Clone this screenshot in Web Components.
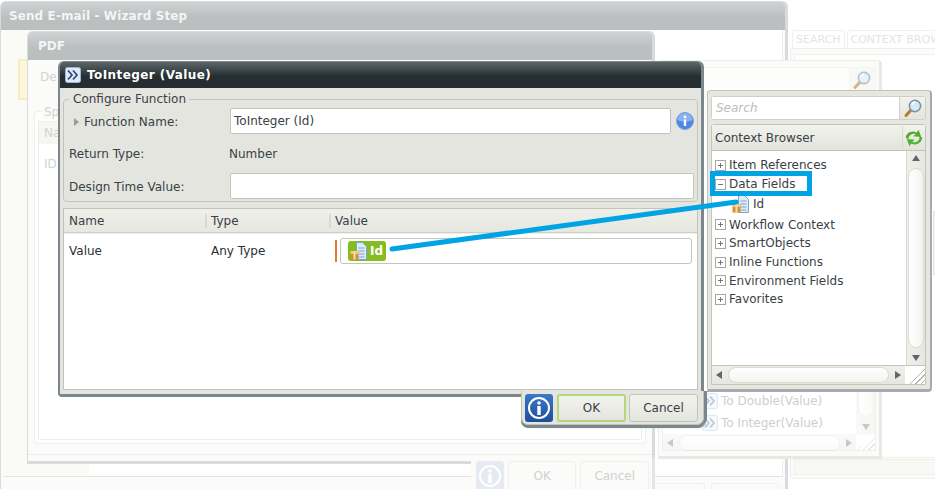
<!DOCTYPE html>
<html>
<head>
<meta charset="utf-8">
<title>ToInteger (Value)</title>
<style>
  html, body { margin: 0; height: 100%; overflow: hidden; background: #fff; }
  body { position: relative; width: 935px; height: 489px; font: 12px "DejaVu Sans", Verdana, sans-serif; color: #394145; }
</style>
</head>
<body>

<!-- fenetres de fond -->
<app-window title="Send E-mail - Wizard Step" faded style="left:0;top:1px;width:788px;height:500px;--body:#fff;--track:.1px">
  <ghost-wizard></ghost-wizard>
</app-window>

<ghost-tabs style="left:790px;top:30px;width:160px;height:449px"></ghost-tabs>

<app-window title="PDF" faded style="left:27px;top:31px;width:628px;height:433px;--body:#fbfbf9;--pad:10px">
  <ghost-pdf></ghost-pdf>
</app-window>
<footer-tab faded style="left:471px;top:458px;width:184px;height:36px"></footer-tab>

<ghost-browser style="left:658px;top:60px;width:224px;height:399px"></ghost-browser>

<!-- dialogue principal -->
<app-window title="ToInteger (Value)" icon style="left:58px;top:61px;width:646px;height:336px;--body:#e4e5df;--track:.42px">
  <function-form></function-form>
</app-window>
<footer-tab style="left:521px;top:391px;width:183px;height:34px"></footer-tab>

<context-browser style="left:707px;top:90px;width:225px;height:302px"></context-browser>

<!-- annotation en bleu -->
<call-out style="left:0;top:0;width:935px;height:489px"></call-out>

<script>
// icones partages
const ICONS = {
  search: `<svg width="20" height="20" viewBox="0 0 20 20"><path d="M8 12 3 17.500" stroke="#b7792c" stroke-width="3" stroke-linecap="round"/><circle cx="12" cy="8" r="5.600" fill="#d8e9f6" stroke="#7c95a6" stroke-width="1.600"/><path d="M9 7a3 3 0 0 1 3-3" stroke="#fff" stroke-width="1.400" fill="none"/></svg>`,
  refresh: `<svg width="20" height="20" viewBox="0 0 22 22"><path d="M2 11C2 6 8 2 14 5l2-3 3 8-9-1 3-2.500C9 5.500 5 8 5 12Z" fill="#58a82c"/><path d="M20 10c0 6-6 10-12 7l-2 3-3-8 9 1-3 2.500c4 1.500 8-1 8-5.500Z" fill="#4cb52f"/></svg>`,
  chevrons: `<svg width="16" height="16" viewBox="0 0 16 16"><rect x=".5" y=".5" width="15" height="15" rx="2" fill="#dfe9f7" stroke="#9fb5d2"/><path d="M3 3.500 7 8l-4 4.500M8 3.500 12 8l-4 4.500" fill="none" stroke="#27476f" stroke-width="1.700"/></svg>`,
  info: `<svg width="18" height="18" viewBox="0 0 18 18"><circle cx="9" cy="9" r="8.500" fill="#4f86e2" stroke="#7ca4e8"/><path d="M1.500 8a7.500 7 0 0 1 15 0c-3 2-12 2-15 0Z" fill="#8db0ee"/><circle cx="9" cy="5" r="1.400" fill="#fff"/><rect x="7.800" y="7.500" width="2.400" height="6.500" fill="#fff"/></svg>`,
  field: `<svg width="20" height="20" viewBox="0 0 20 20"><path d="M7.500 1.500h6l4 4v13h-10Z" fill="#dcebf7" stroke="#7ba6c9"/><path d="M9.500 7h6M9.500 10h6M9.500 13h6M9.500 16h6" stroke="#7ba6c9"/><rect x="1.500" y="10" width="8" height="8.500" fill="#d98f2f"/><rect x="1.500" y="10" width="8" height="3" fill="#f2c77c"/><rect x="4.500" y="10" width="2" height="8.500" fill="#f6dfa9"/></svg>`
};

// fenetre avec barre de titre, claire (faded) ou sombre
class AppWindow extends HTMLElement {
  constructor() {
    super();
    this.attachShadow({mode: "open"});
  }
  connectedCallback() {
    const faded = this.hasAttribute("faded");
    this.shadowRoot.innerHTML = `
      <style>
        :host { position: absolute; display: flex; flex-direction: column; box-sizing: border-box; overflow: hidden;
          border-radius: ${faded ? "6px 6px 0 0" : "6px 6px 4px 4px"}; background: ${faded ? "#d8dbdc" : "#7b878d"};
          padding: ${faded ? "1px 3px 3px 1px" : "1px 3px 3px 2px"}; }
        .bar { flex: none; height: ${faded ? "28px" : "26px"}; display: flex; align-items: center; gap: 6px; padding-left: var(--pad, ${faded ? "8px" : "5px"});
          border-radius: 5px 5px 0 0; font-weight: bold; letter-spacing: var(--track, 0); color: ${faded ? "#f4f5f5" : "#fff"};
          background: ${faded ? "linear-gradient(#d0d3d3,#bcbfc0 55%)" : "linear-gradient(#5c6667,#262e31 55%)"}; }
        .bar svg { display: block; }
        .body { flex: 1; min-height: 0; background: var(--body, #fff); display: flex; flex-direction: column; }
      </style>
      <div class="bar">${this.hasAttribute("icon") ? ICONS.chevrons : ""}<span>${this.getAttribute("title")}</span></div>
      <div class="body"><slot></slot></div>`;
  }
}
customElements.define("app-window", AppWindow);

// formulaire du dialogue
class FunctionForm extends HTMLElement {
  constructor() {
    super();
    this.attachShadow({mode: "open"});
    this.shadowRoot.innerHTML = `
      <style>
        :host { display: flex; flex-direction: column; flex: 1; padding: 6px 3px 4px 3px; min-height: 0; }
        fieldset { margin: 0; padding: 4px 3px 4px 5px; height: 108px; box-sizing: border-box; border: 1px solid #c3c5ba; border-radius: 4px; display: grid;
          grid-template-columns: 161px 1fr 23px; grid-template-rows: 26px 39px 26px; align-items: center; }
        legend { margin-left: 0; padding: 0 3px 0 4px; line-height: 10px; height: 10px; }
        .name { display: flex; align-items: center; gap: 5px; padding: 1px 0 0 5px; }
        .low { padding-top: 1px; }
        .tri { width: 0; height: 0; border: 4px solid transparent; border-left: 5px solid #9a9c95; border-right: 0; }
        .box { height: 26px; box-sizing: border-box; background: #fff; border: 1px solid #c3c5ba; border-radius: 2px; padding: 0 3px; line-height: 25px; }
        .info { justify-self: end; height: 18px; }
        .wide { grid-column: 2 / 4; }
        .num { margin-left: -1px; }
        section { flex: 1; margin-top: 6px; border: 1px solid #c3c5ba; background: #fff; display: flex; flex-direction: column; min-height: 0; }
        .head { height: 23px; display: grid; grid-template-columns: 141px 124px 1fr; align-items: center; background: linear-gradient(#f0f0ea,#e6e7e0); border-bottom: 1px solid #cfd0c7; box-shadow: 0 1px 0 #eee; }
        .head span { padding-left: 4px; border-left: 2px solid #d9dad2; height: 14px; line-height: 14px; }
        .head span:first-child { border-left: 0; padding-left: 5px; }
        .row { display: grid; grid-template-columns: 142px 124px 1fr; height: 36px; align-items: center; color: #2b3033; }
        .row > span { padding-left: 5px; }
        .val { display: flex; align-items: center; gap: 3px; margin-left: 5px; padding-right: 5px; }
        .req { width: 2px; height: 22px; background: #e8792a; flex: none; }
        .input { flex: 1; height: 26px; box-sizing: border-box; border: 1px solid #c3c5ba; border-radius: 3px; padding: 2px 7px; display: flex; }
        .pill { display: flex; align-items: center; gap: 1px; width: 38px; height: 20px; box-sizing: border-box; padding-left: 1px; background: #85bc22; color: #fff; font-weight: bold; border-radius: 3px; }
        .pill svg { display: block; }
      </style>
      <fieldset>
        <legend>Configure Function</legend>
        <div class="name"><span class="tri"></span><span>Function Name:</span></div>
        <div class="box">ToInteger (Id)</div>
        <div class="info">${ICONS.info}</div>
        <div>Return Type:</div>
        <div class="num">Number</div>
        <div></div>
        <div class="low">Design Time Value:</div>
        <div class="box wide"></div>
      </fieldset>
      <section>
        <div class="head"><span>Name</span><span>Type</span><span>Value</span></div>
        <div class="row">
          <span>Value</span>
          <span>Any Type</span>
          <div class="val"><span class="req"></span>
            <div class="input"><div class="pill">${ICONS.field}<span>Id</span></div></div>
          </div>
        </div>
      </section>`;
  }
}
customElements.define("function-form", FunctionForm);

// languette de boutons sous une fenetre
class FooterTab extends HTMLElement {
  constructor() {
    super();
    this.attachShadow({mode: "open"});
  }
  connectedCallback() {
    const faded = this.hasAttribute("faded");
    this.shadowRoot.innerHTML = `
      <style>
        :host { position: absolute; display: flex; gap: ${faded ? "4px" : "3px"}; box-sizing: border-box; padding: 3px 3px 3px 5px; align-items: stretch;
          background: ${faded ? "#fbfbf9" : "#e4e5df"}; border-radius: 0 0 7px 7px;
          ${faded ? "border-right: 3px solid #e3e5e6; border-radius: 0;" : "border: 1px solid #c3c5ba; border-top: 0; box-shadow: 0 3px 0 #7b878d, 3px 0 0 #7b878d, 2px 3px 1px #9aa2a6; padding-left: 3px; padding-right: 2px; padding-bottom: 2px;"} }
        .i { width: 28px; margin-right: ${faded ? "0" : "1px"}; border-radius: 3px; display: flex; align-items: center; justify-content: center;
          background: ${faded ? "#e6ebf3" : "linear-gradient(#3b78c6,#1d4e9c)"}; }
        button { font: inherit; padding: 0; width: 69px; color: ${faded ? "#d0d2d0" : "#394145"}; border-radius: 3px;
          border: 1px solid ${faded ? "#f0f0ec" : "#c3c5ba"}; background: ${faded ? "#fbfbf9" : "linear-gradient(#f3f3ee,#e4e5df)"}; }
        .ok { border: ${faded ? "1px solid #f0f0ec" : "2px solid #b5d77a"}; }
        svg { display: block; }
      </style>
      <div class="i"><svg width="24" height="24" viewBox="0 0 24 24"><circle cx="12" cy="12" r="10" fill="none" stroke="#fff" stroke-width="2"/><circle cx="12" cy="7" r="1.800" fill="#fff"/><rect x="10.300" y="10" width="3.400" height="9" fill="#fff"/></svg></div>
      <button class="ok">OK</button>
      <button>Cancel</button>`;
  }
}
customElements.define("footer-tab", FooterTab);

// une ligne de l'arbre
class TreeItem extends HTMLElement {
  constructor() {
    super();
    this.attachShadow({mode: "open"});
  }
  connectedCallback() {
    const open = this.hasAttribute("open");
    this.shadowRoot.innerHTML = `
      <style>
        :host { display: flex; align-items: center; gap: 3px; height: 18.7px; white-space: nowrap; }
        i { display: block; width: 9px; height: 9px; border: 1px solid #a5a8a2; background: linear-gradient(90deg,#777,#777) center/5px 1px no-repeat${open ? "" : ",linear-gradient(#777,#777) center/1px 5px no-repeat"}; }
      </style>
      <i></i><slot></slot>`;
  }
}
customElements.define("tree-item", TreeItem);

// barre de defilement
class ScrollBar extends HTMLElement {
  constructor() {
    super();
    this.attachShadow({mode: "open"});
  }
  connectedCallback() {
    const h = this.hasAttribute("horizontal");
    this.shadowRoot.innerHTML = `
      <style>
        :host { display: flex; flex-direction: ${h ? "row" : "column"}; align-items: center; box-sizing: border-box; background: linear-gradient(${h ? "180deg" : "90deg"},#f0f0ea,#e6e7e0); flex: none;
          ${h ? "height:18px;padding:0 4px" : "width:19px;padding:4px 0"}; }
        .a { width: 0; height: 0; border: 4px solid transparent; flex: none; }
        .t { flex: 1; margin: ${h ? "0 6px" : "7px 0"}; ${h ? "height:14px" : "width:14px"}; background: linear-gradient(${h ? "180deg" : "90deg"},#fff,#f3f3ee); border: 1px solid #dadbd2; border-radius: 8px; }
        .up { border-bottom: 6px solid #5e666b; border-top: 0; }
        .down { border-top: 6px solid #5e666b; border-bottom: 0; }
        .left { border-right: 6px solid #5e666b; border-left: 0; }
        .right { border-left: 6px solid #5e666b; border-right: 0; }
      </style>
      <span class="a ${h ? "left" : "up"}"></span><span class="t"></span><span class="a ${h ? "right" : "down"}"></span>`;
  }
}
customElements.define("scroll-bar", ScrollBar);

// panneau Context Browser
class ContextBrowser extends HTMLElement {
  constructor() {
    super();
    this.attachShadow({mode: "open"});
    this.shadowRoot.innerHTML = `
      <style>
        :host { position: absolute; display: flex; flex-direction: column; box-sizing: border-box; gap: 4px; background: #e6e7e0;
          border: 1px solid #c3c5ba; border-right: 2px solid #a6abad; border-bottom: 3px solid #a6abad; border-radius: 4px 4px 4px 0; padding: 5px 4px 4px 3px; }
        .search { display: flex; height: 24px; flex: none; border: 1px solid #cfd0c7; border-radius: 3px; box-sizing: border-box; }
        .search div { flex: 1; background: #fff; font-style: italic; color: #bcbcbc; line-height: 22px; padding-left: 4px; }
        .search button { width: 26px; padding: 0; border: 0; border-left: 1px solid #cfd0c7; background: linear-gradient(#f3f3ee,#e4e5df); display: flex; align-items: center; justify-content: center; }
        .tree { flex: 1; min-height: 0; display: flex; flex-direction: column; border: 1px solid #c3c5ba; border-radius: 3px 3px 0 0; background: #fff; }
        .head { flex: none; height: 25px; display: flex; align-items: center; justify-content: space-between; padding-left: 3px; background: linear-gradient(#f3f3ee,#e2e3dc); border-bottom: 1px solid #c3c5ba; }
        .head span { flex: none; width: 22px; height: 24px; border-left: 1px solid #d9dad2; display: flex; align-items: center; justify-content: center; }
        .mid { flex: 1; min-height: 0; display: flex; }
        .items { flex: 1; padding: 5px 0 0 3px; }
        .child { display: flex; align-items: center; gap: 2px; height: 19px; margin: 1px 0 2px 16px; }
        .bottom { flex: none; display: flex; height: 18px; border-top: 1px solid #c3c5ba; }
        .bottom scroll-bar { flex: 1; }
        .grip { width: 19px; border-left: 1px solid #d9dad2; background: repeating-linear-gradient(135deg,transparent 0 3px,#b5b8b0 3px 4px); clip-path: polygon(100% 0,100% 100%,0 100%); }
        scroll-bar { border-left: 1px solid #d9dad2; }
        .bottom scroll-bar { border-left: 0; }
        svg { display: block; }
      </style>
      <div class="search"><div>Search</div><button>${ICONS.search}</button></div>
      <div class="tree">
        <div class="head">Context Browser<span>${ICONS.refresh}</span></div>
        <div class="mid">
          <div class="items">
            <tree-item>Item References</tree-item>
            <tree-item open>Data Fields</tree-item>
            <div class="child">${ICONS.field}<span>Id</span></div>
            <tree-item>Workflow Context</tree-item>
            <tree-item>SmartObjects</tree-item>
            <tree-item>Inline Functions</tree-item>
            <tree-item>Environment Fields</tree-item>
            <tree-item>Favorites</tree-item>
          </div>
          <scroll-bar></scroll-bar>
        </div>
        <div class="bottom"><scroll-bar horizontal></scroll-bar><span class="grip"></span></div>
      </div>`;
  }
}
customElements.define("context-browser", ContextBrowser);

// fond de la fenetre Wizard
class GhostWizard extends HTMLElement {
  constructor() {
    super();
    this.attachShadow({mode: "open"});
    this.shadowRoot.innerHTML = `
      <style>
        :host { display: flex; flex-direction: column; flex: 1; background: #fbfbf9; padding: 0 2px; }
        .top { flex: none; height: 446px; display: flex; border-bottom: 1px solid #e4e5e3; }
        .left { width: 86px; background: #fafaf7; padding: 29px 0 0 15px; box-sizing: border-box; }
        .mail { width: 40px; height: 41px; box-sizing: border-box; background: #fdf6d8; border: 2px solid #f6ecc4; }
        .main { flex: 1; background: #fff; border-right: 1px solid #eee; }
        .foot { display: flex; justify-content: flex-end; gap: 6px; padding: 6px 4px 0 0; }
        .foot span { width: 66px; height: 30px; border: 1px solid #f0f0ec; border-radius: 3px; }
      </style>
      <div class="top"><div class="left"><div class="mail"></div></div><div class="main"></div></div>
      <div class="foot"><span></span><span></span></div>`;
  }
}
customElements.define("ghost-wizard", GhostWizard);

// fond de la fenetre PDF
class GhostPdf extends HTMLElement {
  constructor() {
    super();
    this.attachShadow({mode: "open"});
    this.shadowRoot.innerHTML = `
      <style>
        :host { display: flex; flex-direction: column; flex: 1; padding: 8px 6px 0 6px; color: #d2d4d2; }
        .de { height: 43px; padding-left: 6px; line-height: 18px; flex: none; }
        .set { flex: 1; border: 1px solid #eeeeea; border-radius: 4px; padding: 9px 3px 3px 3px; position: relative; background: #fff; }
        .set b { position: absolute; top: -7px; left: 7px; font-weight: normal; background: #fbfbf9; padding: 0 2px; }
        .tbl { height: 100%; box-sizing: border-box; border: 1px solid #eeeeea; }
        .h { height: 22px; line-height: 22px; padding-left: 5px; background: #f6f6f2; }
        .r { padding: 13px 0 0 5px; }
        .foot { flex: none; height: 10px; margin: 0 -6px; border-bottom: 1px solid #eeeeea; }
        .rest { flex: none; height: 6px; }
      </style>
      <div class="de">De</div>
      <div class="set"><b>Sp</b><div class="tbl"><div class="h">Na</div><div class="r">ID</div></div></div>
      <div class="foot"></div><div class="rest"></div>`;
  }
}
customElements.define("ghost-pdf", GhostPdf);

// onglets en fond a droite
class GhostTabs extends HTMLElement {
  constructor() {
    super();
    this.attachShadow({mode: "open"});
    this.shadowRoot.innerHTML = `
      <style>
        :host { position: absolute; display: flex; flex-direction: column; color: #e4e5e3; font-size: 11px; }
        .tabs { display: flex; gap: 2px; height: 18px; padding-left: 2px; flex: none; }
        .tabs span { border: 1px solid #f0f0ec; border-bottom: 0; border-radius: 3px 3px 0 0; padding: 2px 3px 0 3px; white-space: nowrap; line-height: 14px; }
        .panel { flex: 1; border: 1px solid #eeeeea; border-radius: 3px; background: #fbfbf9; padding: 5px 3px 3px 3px; display: flex; flex-direction: column; }
        .inner { flex: 1; background: #fff; border: 1px solid #f0f0ec; position: relative; }
        .strip { position: absolute; left: 138px; top: 156px; width: 10px; height: 62px; background: #f2f2ef; border: 1px solid #e3e4e0; }
        .scroll { height: 14px; margin-top: 1px; flex: none; background: #f8f8f5; border: 1px solid #f0f0ec; }
      </style>
      <div class="tabs"><span>SEARCH</span><span>CONTEXT BROWSER</span></div>
      <div class="panel"><div class="inner"><div class="strip"></div></div><div class="scroll"></div></div>`;
  }
}
customElements.define("ghost-tabs", GhostTabs);

// panneau de fonctions en fond
class GhostBrowser extends HTMLElement {
  constructor() {
    super();
    this.attachShadow({mode: "open"});
    this.shadowRoot.innerHTML = `
      <style>
        :host { position: absolute; display: flex; flex-direction: column; box-sizing: border-box; background: #fbfbf9; border: 1px solid #eeeeea; border-right: 3px solid #e8e8e6; border-bottom: 3px solid #e8e8e6; border-radius: 4px 4px 0 0; padding: 6px 3px 5px 3px; color: #cdcfcd; }
        .s { height: 23px; display: flex; justify-content: flex-end; border: 1px solid #f0f0ec; background: #fff; flex: none; opacity: .55; }
        .s span { width: 26px; display: flex; align-items: center; justify-content: center; background: #f6f6f2; }
        .list { flex: 1; min-height: 0; margin-top: 5px; background: #fff; border: 1px solid #f0f0ec; display: flex; flex-direction: column; }
        .mid { flex: 1; min-height: 0; display: flex; }
        .rows { flex: 1; display: flex; flex-direction: column; justify-content: flex-end; }
        .f { display: flex; align-items: center; gap: 3px; height: 22px; padding-left: 41px; white-space: nowrap; }
        .f svg { opacity: .3; margin-left: -2px; }
        .bottom { flex: none; display: flex; height: 15px; border-top: 1px solid #f0f0ec; opacity: .35; }
        .bottom scroll-bar { flex: 1; height: 15px; }
        .mid scroll-bar { opacity: .35; }
        .grip { width: 19px; background: repeating-linear-gradient(135deg,transparent 0 3px,#b5b8b0 3px 4px); clip-path: polygon(100% 0,100% 100%,0 100%); }
        svg { display: block; }
      </style>
      <div class="s"><span>${ICONS.search}</span></div>
      <div class="list">
        <div class="mid">
          <div class="rows">
            <div class="f">${ICONS.chevrons}<span>To Double(Value)</span></div>
            <div class="f">${ICONS.chevrons}<span>To Integer(Value)</span></div>
          </div>
          <scroll-bar></scroll-bar>
        </div>
        <div class="bottom"><scroll-bar horizontal></scroll-bar><span class="grip"></span></div>
      </div>`;
  }
}
customElements.define("ghost-browser", GhostBrowser);

// cadre et trait bleus dessines par dessus la capture
class CallOut extends HTMLElement {
  constructor() {
    super();
    this.attachShadow({mode: "open"});
    this.shadowRoot.innerHTML = `
      <style>
        :host { position: absolute; display: block; pointer-events: none; }
        svg { display: block; }
      </style>
      <svg width="935" height="489" viewBox="0 0 935 489">
        <rect x="712.500" y="173.500" width="97" height="20" fill="none" stroke="#00a4e4" stroke-width="5"/>
        <path d="M392 249 736 202" stroke="#00a4e4" stroke-width="5" stroke-linecap="round"/>
      </svg>`;
  }
}
customElements.define("call-out", CallOut);
</script>
</body>
</html>
